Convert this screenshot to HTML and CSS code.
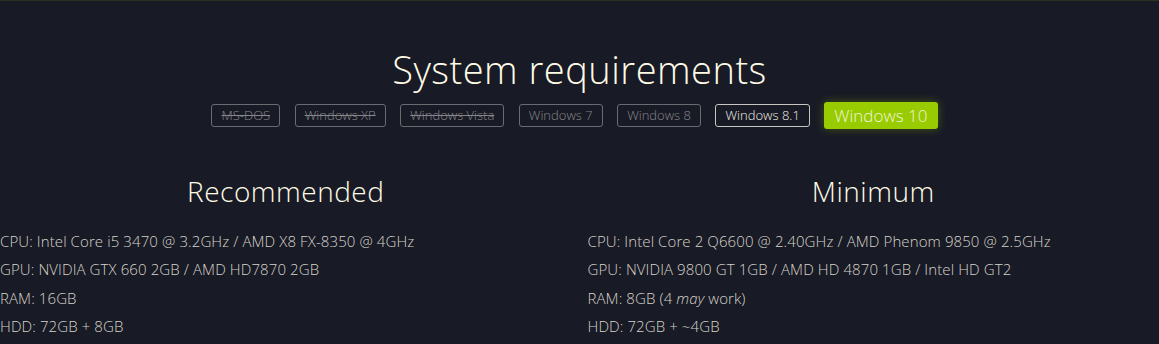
FILE: index.html
```html
<!DOCTYPE html>
<html lang="en">
<head>
<meta charset="utf-8">
<title>System requirements</title>
<link rel="stylesheet" href="styles.css">
</head>
<body>
<section class="sysreq">
  <h1 class="title">System requirements</h1>
  <div class="os-list">
    <span class="os os-dead">MS-DOS</span>
    <span class="os os-dead">Windows XP</span>
    <span class="os os-dead">Windows Vista</span>
    <span class="os os-old">Windows 7</span>
    <span class="os os-old">Windows 8</span>
    <span class="os os-ok">Windows 8.1</span>
    <span class="os os-best">Windows 10</span>
  </div>
  <div class="columns">
    <div class="col">
      <h2 class="col-title">Recommended</h2>
      <ul class="specs">
        <li>CPU: Intel Core i5 3470 @ 3.2GHz / AMD X8 FX-8350 @ 4GHz</li>
        <li>GPU: NVIDIA GTX 660 2GB / AMD HD7870 2GB</li>
        <li>RAM: 16GB</li>
        <li>HDD: 72GB + 8GB</li>
      </ul>
    </div>
    <div class="col">
      <h2 class="col-title">Minimum</h2>
      <ul class="specs">
        <li>CPU: Intel Core 2 Q6600 @ 2.40GHz / AMD Phenom 9850 @ 2.5GHz</li>
        <li>GPU: NVIDIA 9800 GT 1GB / AMD HD 4870 1GB / Intel HD GT2</li>
        <li>RAM: 8GB (4 <em>may</em> work)</li>
        <li>HDD: 72GB + ~4GB</li>
      </ul>
    </div>
  </div>
</section>
</body>
</html>
```
FILE: styles.css
```css
html, body {
  margin: 0;
  padding: 0;
}
body {
  background: #181a25;
  border-top: 1px solid #2a3121;
  font-family: "Open Sans", "Noto Sans", sans-serif;
  color: #d6d3cb;
  height: 343px;
  overflow: hidden;
}
.sysreq {
  padding-top: 43px;
}
.title {
  margin: 0;
  text-align: center;
  font-weight: 300;
  font-size: 38px;
  line-height: 50px;
  color: #fffbe6;
  letter-spacing: 0.5px;
}
.os-list {
  display: flex;
  justify-content: center;
  align-items: center;
  gap: 14.5px;
  margin-top: 8px;
  padding-right: 10px;
}
.os {
  display: inline-block;
  height: 21px;
  line-height: 21px;
  padding: 0 9px;
  border: 1px solid #6b6c72;
  border-radius: 3px;
  font-size: 13px;
  font-weight: 300;
  color: #87878b;
}
.os-dead {
  text-decoration: line-through;
}
.os-ok {
  border-color: #c8c6c0;
  color: #f2efe6;
}
.os-best {
  height: 27px;
  line-height: 27px;
  border: none;
  padding: 0 10px;
  background: #99cc00;
  color: #eef4d8;
  font-size: 17px;
  box-shadow: 0 0 10px rgba(153, 204, 0, 0.35);
}
.columns {
  display: grid;
  grid-template-columns: 1fr 1fr;
  column-gap: 16px;
  margin-top: 44px;
}
.col-title {
  margin: 0;
  text-align: center;
  font-weight: 300;
  font-size: 28px;
  line-height: 36px;
  color: #fffbe6;
  letter-spacing: 0.5px;
}
.specs {
  list-style: none;
  margin: 18px 0 0;
  padding: 0;
  font-size: 15px;
  font-weight: 300;
  letter-spacing: 0.1px;
}
.specs li {
  line-height: 28.4px;
  white-space: nowrap;
}
.specs em {
  font-style: italic;
}
```
